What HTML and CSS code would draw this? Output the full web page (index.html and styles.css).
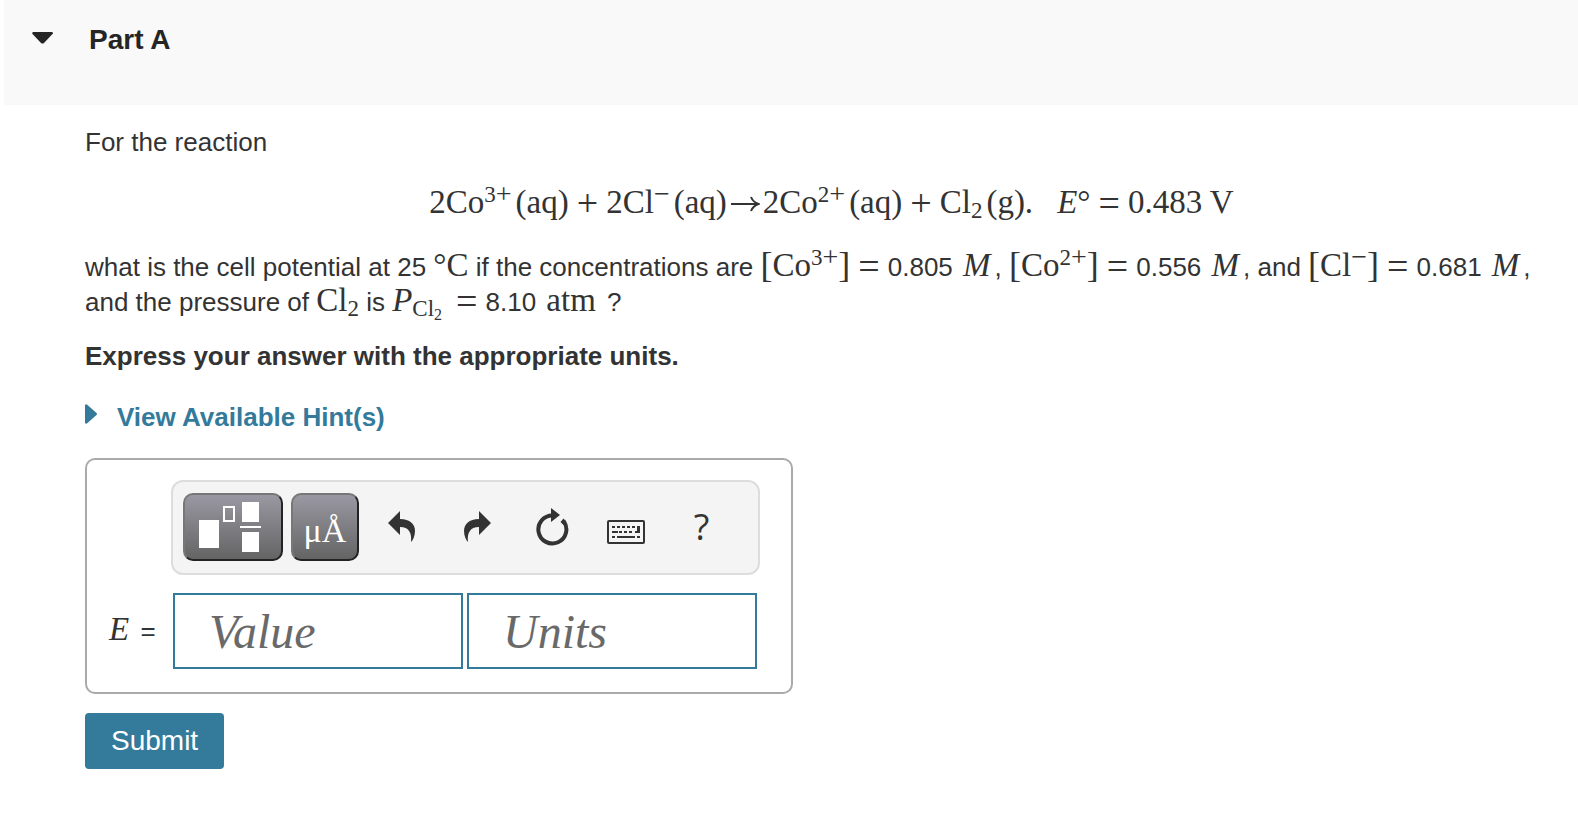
FILE: index.html
```html
<!doctype html>
<html lang="en">

<head>
    <title>Part A</title>
    <meta charset="utf-8"/>
    <link rel="stylesheet" href="styles.css">
</head>

<body>
    <header class="part-header">
        <button class="toggle" type="button" aria-label="Collapse">
            <svg width="22" height="12" viewBox="0 0 22 12"><path d="M1 0H20Q22 1 20 2.500L12 11Q10.500 12 9 11L1 2.500Q-.5 1 1 0z"/></svg>
        </button>
        <h1>Part A</h1>
    </header>

    <main class="part">
        <p class="intro">For the reaction</p>

        <p class="equation math">
            <span class="term">2Co<sup>3<i class="op">+</i></sup></span><span class="state">(aq)</span><span class="op">+</span><span class="term">2Cl<sup><i class="op">−</i></sup></span><span class="state">(aq)</span><svg class="arrow" width="30" height="16" viewBox="0 0 30 16"><path d="M1 8H28M21 1Q23 6 28.500 8Q23 10 21 15"/></svg><span class="term">2Co<sup>2<i class="op">+</i></sup></span><span class="state">(aq)</span><span class="op">+</span><span class="term">Cl<sub>2</sub></span><span class="state">(g).</span><span class="potential"><span class="var">E</span>°</span><span class="op">=</span><span>0.483 V</span>
        </p>

        <p class="question">
            what is the cell potential at 25 <span class="math">°C</span> if the concentrations are
            <span class="math conc"><span class="brk">[</span>Co<sup>3<i class="op">+</i></sup><span class="brk">]</span><span class="op">=</span></span>0.805 <span class="math var molar">M</span>,
            <span class="math conc"><span class="brk">[</span>Co<sup>2<i class="op">+</i></sup><span class="brk">]</span><span class="op">=</span></span>0.556 <span class="math var molar">M</span>, and
            <span class="math conc"><span class="brk">[</span>Cl<sup><i class="op">−</i></sup><span class="brk">]</span><span class="op">=</span></span>0.681 <span class="math var molar">M</span>,
            <br>
            and the pressure of <span class="math">Cl<sub>2</sub></span> is
            <span class="math pressure"><span class="var">P</span><sub>Cl<small>2</small></sub><span class="op">=</span></span>8.10 <span class="math atm">atm</span> ?
        </p>

        <p class="instruction">Express your answer with the appropriate units.</p>

        <a class="hints" href="#hints">
            <svg width="12" height="20" viewBox="0 0 12 20"><path d="M0 1Q1-.5 2.500 1L11.500 9Q12.500 10 11.500 11L2.500 19Q1 20.500 0 19z"/></svg>
            View Available Hint(s)
        </a>

        <form id="answer">
            <div class="answer-box">
                <div class="toolbar">
                    <button class="key templates" type="button" aria-label="Templates">
                        <svg width="68" height="52" viewBox="0 0 68 52">
                            <path d="M0 19h20v28H0zM43 1h17v20H43zM41 25h21v2H41zM43 31h17v20H43z"/>
                            <path class="line" d="M25 6h10v14H25z"/>
                        </svg>
                    </button>
                    <button class="key units" type="button">μÅ</button>
                    <button class="tool" type="button" aria-label="Undo">
                        <svg width="28" height="32" viewBox="0 0 28 32"><path d="M0 12L12 0V8C22 8 27 13 27 20C27 25 25 29 23 31C24 22 21 16 12 16V24z"/></svg>
                    </button>
                    <button class="tool" type="button" aria-label="Redo">
                        <svg width="28" height="32" viewBox="0 0 28 32"><path d="M28 12L16 0V8C6 8 1 13 1 20C1 25 3 29 5 31C4 22 7 16 16 16V24z"/></svg>
                    </button>
                    <button class="tool" type="button" aria-label="Reset">
                        <svg width="34" height="38" viewBox="0 0 34 38"><path class="ring" d="M18 7.500A14 14 0 1 0 28.500 13"/><path d="M16 0L25 7L16 14zM25.500 14L28.500 10.500L31.500 14L28.500 17z"/></svg>
                    </button>
                    <button class="tool" type="button" aria-label="Keyboard">
                        <svg class="keyboard" width="40" height="34" viewBox="0 0 40 34">
                            <rect x="1" y="11" width="36" height="22" rx="1"/>
                            <path d="M5 17h3M10 17h3M15 17h3M20 17h3M25 17h3M5 22h6M12 22h3M17 22h3M22 22h3M5 27h3M10 27h18M30 27h3"/>
                            <path class="solid" d="M30 16h3v7h-5v-2h2z"/>
                        </svg>
                    </button>
                    <button class="tool help" type="button">?</button>
                </div>
                <label for="value"><span class="math var">E</span> =</label>
                <div class="fields">
                    <input id="value" type="text" placeholder="Value">
                    <input type="text" placeholder="Units" aria-label="Units">
                </div>
            </div>
            <button class="submit" type="submit">Submit</button>
        </form>
    </main>
</body>

</html>
```
FILE: styles.css
```css
* { box-sizing: border-box; margin: 0; padding: 0; }

body {
    background: #fff;
    color: #333;
    font: 26px/35px "Liberation Sans", Arial, sans-serif;
}

button { font: inherit; color: inherit; border: 0; background: none; cursor: pointer; }
svg { display: block; fill: currentColor; }

/* header */
.part-header {
    display: flex;
    align-items: flex-start;
    gap: 35px;
    height: 105px;
    margin-left: 4px;
    padding: 22px 28px;
    background: #f9f9f9;
    color: #252525;
}
.toggle { padding: 10px 0; }
h1 { font-size: 28px; line-height: 35px; }

/* question */
.part { padding: 20px 0 40px 85px; }
.math { font-family: "Liberation Serif", "Times New Roman", serif; font-size: 33px; line-height: 0; }
.math sup, .math sub { font-size: 23px; line-height: 0; }
.math sup { vertical-align: 11px; }
.math sub { vertical-align: -5px; }
.var { font-style: italic; }
.op { font-size: 38px; font-style: normal; line-height: 0; vertical-align: -3px; }
sup .op { font-size: 28px; vertical-align: -1px; }
.brk { font-size: 36px; line-height: 0; vertical-align: -1px; }

.equation {
    margin: 22px 0 28px;
    line-height: 40px;
    text-align: center;
}
.equation .op { margin: 0 8px; }
.equation sup .op { margin: 0; }
.state { margin-left: 4px; }
.arrow {
    display: inline-block;
    margin: 0 3px;
    vertical-align: 1px;
    fill: none;
    stroke: currentColor;
    stroke-width: 2;
}
.potential { margin-left: 24px; }

.conc .op { margin: 0 8px; }
.conc sup .op { margin: 0; }
.pressure .op { margin: 0 8px 0 14px; }
.molar { margin: 0 4px 0 3px; }
.pressure small { font-size: 16px; vertical-align: -4px; }
.atm { margin: 0 4px 0 3px; }

.instruction { margin: 19px 0 24px; font-weight: bold; }
.hints {
    display: inline-flex;
    align-items: flex-start;
    gap: 20px;
    margin-bottom: 23px;
    color: #337a9b;
    font-weight: bold;
    text-decoration: none;
}
.hints svg { margin-top: 4px; }

/* answer */
.answer-box {
    display: grid;
    grid-template-columns: 62px minmax(0, 1fr);
    align-items: center;
    row-gap: 18px;
    max-width: 708px;
    padding: 20px 31px 23px 22px;
    border: 2px solid #aaa;
    border-radius: 10px;
}
.answer-box label .math { margin-right: 4px; }
.toolbar {
    grid-column: 2;
    display: flex;
    align-items: center;
    padding: 11px 10px 12px;
    border: 2px solid #ddd;
    border-radius: 12px;
    background: #f4f4f4;
}
.key {
    display: flex;
    align-items: center;
    justify-content: center;
    height: 68px;
    border: 2px solid;
    border-color: #777 #222 #222 #777;
    border-radius: 10px;
    background: linear-gradient(#9a98a2, #646464);
    color: #fff;
}
.templates { width: 100px; margin-right: 8px; }
.templates .line { fill: none; stroke: currentColor; stroke-width: 2; }
.units {
    width: 68px;
    margin-right: 5px;
    padding-top: 6px;
    font-family: "Liberation Serif", serif;
    font-size: 34px;
}
.tool {
    display: flex;
    justify-content: center;
    width: 75px;
}
.ring { fill: none; stroke: currentColor; stroke-width: 4; }
.keyboard { fill: none; stroke: currentColor; stroke-width: 2; }
.keyboard .solid { fill: currentColor; stroke: none; }
.help { font: 36px/40px "Open Sans", sans-serif; }

.fields { display: flex; gap: 4px; padding: 0 3px 0 2px; }
.fields input {
    flex: 1;
    min-width: 0;
    height: 76px;
    padding: 0 34px;
    border: 2px solid #337a9b;
    background: #fff;
    font: italic 48px "Liberation Serif", serif;
}
.fields input::placeholder { color: #696969; opacity: 1; }

.submit {
    display: block;
    margin-top: 19px;
    padding: 0 26px;
    border-radius: 4px;
    background: #337a9b;
    color: #fff;
    font-size: 28px;
    line-height: 56px;
}
```
